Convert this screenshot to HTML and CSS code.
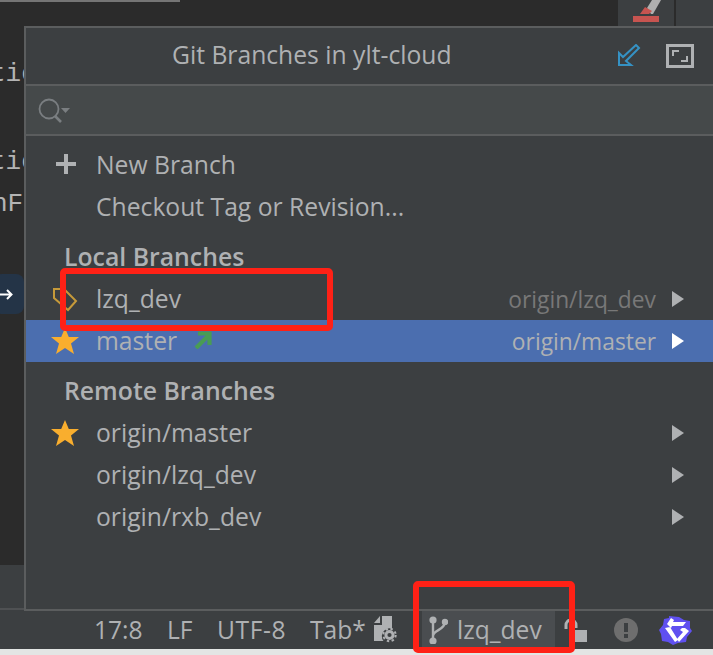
FILE: index.html
```html
<!DOCTYPE html>
<html lang="en">
<head>
<meta charset="utf-8">
<title>Git Branches</title>
<link rel="stylesheet" href="styles.css">
</head>
<body>
<div class="screen">
  <div class="main">
    <div class="editor">
      <div class="tab-line"></div>
      <div class="code code-a">tic</div>
      <div class="code code-b">tic</div>
      <div class="code code-c">nFa</div>
      <div class="gutter-tag">
        <svg width="13" height="13" viewBox="0 0 13 13"><path d="M0 6.500h11M7 2l4.500 4.500L7 11" fill="none" stroke="#fff" stroke-width="2"/></svg>
      </div>
      <div class="toolbar">
        <svg class="eraser" width="28" height="22" viewBox="0 0 28 22"><path d="M14 8 19 0h9l-8 14h-2z" fill="#afafaf"/><path d="M7 14l5-7 7 4-3 3z" fill="#c75450"/><rect x="0" y="16" width="26" height="6" fill="#c75450"/></svg>
      </div>
      <div class="toolbar-end"></div>
    </div>
    <div class="tool-strip"></div>
  </div>

  <div class="statusbar">
    <span class="st st-pos">17:8</span>
    <span class="st st-lf">LF</span>
    <span class="st st-enc">UTF-8</span>
    <span class="st st-tab">Tab*</span>
    <svg class="st-doc" width="24" height="27" viewBox="0 0 24 27"><path d="M8 0h10v12.500a8 8 0 0 0-8.500 12.500H0V9h8z" fill="#afb1b3"/><path d="M0 7 6 0v7z" fill="#afb1b3"/><circle cx="15.500" cy="19" r="3.600" fill="none" stroke="#afb1b3" stroke-width="3"/><circle cx="15.500" cy="19" r="6.200" fill="none" stroke="#afb1b3" stroke-width="2" stroke-dasharray="2.400 2.500"/></svg>
    <div class="st-branch">
      <svg width="20" height="28" viewBox="0 0 20 28"><circle cx="5" cy="4" r="3.600" fill="#afb1b3"/><circle cx="5" cy="25" r="3.600" fill="#afb1b3"/><circle cx="17" cy="6" r="3.200" fill="#afb1b3"/><path d="M5 4v21M17 6c0 8-12 8-12 14" fill="none" stroke="#afb1b3" stroke-width="2.400"/></svg>
      <span>lzq_dev</span>
    </div>
    <svg class="st-lock" width="24" height="24" viewBox="0 0 24 24"><path d="M2 10V6a5 5 0 0 1 10 0v3" fill="none" stroke="#afb1b3" stroke-width="3"/><rect x="11" y="11" width="12" height="12" fill="#afb1b3"/></svg>
    <svg class="st-warn" width="24" height="24" viewBox="0 0 24 24"><circle cx="12" cy="12" r="12" fill="#6e6e6e"/><rect x="10" y="5" width="4" height="9" fill="#3c3f41"/><rect x="10" y="16" width="4" height="4" fill="#3c3f41"/></svg>
    <svg class="st-logo" width="33" height="30" viewBox="0 0 33 30"><path d="M10 1l10 1 5 3 6 1 0 7 2 3-5 6-1 5-8 1-5 2-5-3-6-1-1-7-2-4 4-5 1-6 5-1z" fill="#5f50f0"/><path d="M8 9l4-6 3 2-1 2h13l-3 4H13l-1 2zM6 13l5-1 8 13-3 2zM23 13l3 0 4 3-10 11-2-3 6-7-3-2z" fill="#fff"/></svg>
  </div>
  <div class="desk-strip"></div>

  <section class="popup">
    <header class="popup-head">
      <h1 class="popup-title">Git Branches in ylt-cloud</h1>
      <svg class="ic-pin" width="24" height="24" viewBox="0 0 24 24"><path d="M19 1l3 3L9 17l5 4H2V9l4 4z" fill="none" stroke="#3592c4" stroke-width="2"/></svg>
      <div class="ic-expand"><i class="tl"></i><i class="br"></i></div>
    </header>
    <div class="search">
      <svg width="34" height="26" viewBox="0 0 34 26"><circle cx="11" cy="11" r="9.500" fill="none" stroke="#7a7e81" stroke-width="1.800"/><path d="M17 18l6 6" stroke="#7a7e81" stroke-width="2.600"/><path d="M23 10h9l-4.500 5z" fill="#7a7e81"/></svg>
    </div>
    <div class="list">
      <div class="row">
        <span class="lead"><svg class="plus" width="20" height="20" viewBox="0 0 20 20"><path d="M0 10h20M10 0v20" stroke="#afb1b3" stroke-width="4"/></svg></span>
        <span class="name">New Branch</span>
      </div>
      <div class="row"><span class="lead"></span><span class="name">Checkout Tag or Revision...</span></div>
      <div class="group">Local Branches</div>
      <div class="row">
        <span class="lead"><svg class="tag" width="26" height="26" viewBox="0 0 26 26"><path d="M2 3h10l12 12-8 9L2 12z" fill="none" stroke="#c69a3a" stroke-width="2"/></svg></span>
        <span class="name">lzq_dev</span>
        <span class="track">origin/lzq_dev</span>
        <span class="arrow"></span>
      </div>
      <div class="row row-selected">
        <span class="lead"><svg width="28" height="26" viewBox="0 0 28 26"><path class="star" d="M14 0l3.800 9H28l-8 6.500 3 10.500-9-6-9 6 3-10.500L0 9h10.200z"/></svg></span>
        <span class="name">master</span>
        <svg class="up" width="18" height="18" viewBox="0 0 18 18"><path d="M2 17 14 5M4 2.500h11.500V14" fill="none" stroke="#499c54" stroke-width="4.200"/></svg>
        <span class="track">origin/master</span>
        <span class="arrow"></span>
      </div>
      <div class="group">Remote Branches</div>
      <div class="row">
        <span class="lead"><svg width="28" height="26" viewBox="0 0 28 26"><path class="star" d="M14 0l3.800 9H28l-8 6.500 3 10.500-9-6-9 6 3-10.500L0 9h10.200z"/></svg></span>
        <span class="name">origin/master</span>
        <span class="track"></span>
        <span class="arrow"></span>
      </div>
      <div class="row"><span class="lead"></span><span class="name">origin/lzq_dev</span><span class="track"></span><span class="arrow"></span></div>
      <div class="row"><span class="lead"></span><span class="name">origin/rxb_dev</span><span class="track"></span><span class="arrow"></span></div>
    </div>
  </section>

  <div class="mark mark-row"></div>
  <div class="mark mark-status"></div>
</div>
</body>
</html>
```

FILE: styles.css
```css
* { box-sizing: border-box; }
html, body { margin: 0; padding: 0; }
body { width: 713px; height: 655px; overflow: hidden; background: #3c3f41; }

.screen {
  position: relative;
  width: 713px;
  height: 655px;
  overflow: hidden;
  display: flex;
  flex-direction: column;
  font-family: "Open Sans", "Noto Sans", sans-serif;
  color: #afb1b3;
}

.main { height: 610px; display: flex; flex-direction: column; flex: none; }
.editor { position: relative; height: 565px; background: #2b2b2b; flex: none; }
.tool-strip { flex: 1; background: #3c3f41; border-bottom: 2px solid #4f5153; }

.tab-line { width: 180px; height: 2px; background: #757575; }
.code {
  position: absolute;
  left: -10px;
  font-family: "Liberation Mono", monospace;
  font-size: 26px;
  line-height: 30px;
  color: #b4b4b4;
}
.code-a { top: 59px; }
.code-b { top: 147px; }
.code-c { top: 189px; left: -8px; }

.gutter-tag {
  position: absolute;
  left: -6px;
  top: 274px;
  width: 30px;
  height: 40px;
  border-radius: 8px;
  background: #243447;
  display: flex;
  align-items: center;
  padding-left: 6px;
}

.toolbar {
  position: absolute;
  left: 618px;
  top: 0;
  width: 56px;
  height: 26px;
  background: #3c3f41;
}
.eraser { position: absolute; left: 15px; top: 0; }
.toolbar-end {
  position: absolute;
  left: 676px;
  top: 0;
  width: 37px;
  height: 26px;
  background: #3c3f41;
}

.statusbar {
  position: relative;
  flex: 1;
  display: flex;
  align-items: center;
  background: #3c3f41;
  font-size: 24.6px;
  color: #afb1b3;
  padding-left: 94px;
}
.st { white-space: nowrap; line-height: 38px; }
.st-pos { width: 73px; }
.st-lf { width: 50px; }
.st-enc { width: 93px; letter-spacing: .6px; }
.st-tab { width: 64px; }
.st-doc { margin-right: 24px; flex: none; }
.st-branch {
  flex: none;
  width: 133px;
  height: 39px;
  background: #4a4d50;
  display: flex;
  align-items: center;
  gap: 9px;
  padding-left: 6px;
}
.st-lock { margin: 2px 0 0 9px; flex: none; }
.st-warn { margin-left: 26px; flex: none; }
.st-logo { margin-left: 21px; flex: none; }

.desk-strip { height: 7px; background: #e3e5e4; flex: none; }

.popup {
  position: absolute;
  left: 24px;
  top: 26px;
  width: 700px;
  height: 585px;
  background: #3c3f41;
  border: 2px solid #5b5d5e;
  display: flex;
  flex-direction: column;
}
.popup-head {
  position: relative;
  height: 56px;
  flex: none;
  display: flex;
  align-items: center;
}
.popup-title {
  margin: -2px 0 0 146px;
  font-size: 24.7px;
  font-weight: 400;
  line-height: 56px;
  color: #afb1b3;
}
.ic-pin { position: absolute; left: 591px; top: 16px; }
.ic-expand {
  position: absolute;
  left: 640px;
  top: 16px;
  width: 28px;
  height: 24px;
  border: 3px solid #afb1b3;
}
.ic-expand i { position: absolute; width: 7px; height: 6px; }
.ic-expand .tl { left: 3px; top: 3px; border-left: 2px solid #afb1b3; border-top: 2px solid #afb1b3; }
.ic-expand .br { right: 3px; bottom: 3px; border-right: 2px solid #afb1b3; border-bottom: 2px solid #afb1b3; }

.search {
  height: 52px;
  flex: none;
  background: #45494a;
  border-top: 2px solid #5b5d5e;
  border-bottom: 2px solid #5b5d5e;
  display: flex;
  align-items: center;
  padding: 0 0 0 12px;
}
.search svg { margin-top: 2px; }

.list { padding-top: 8px; flex: 1; }
.row {
  height: 42px;
  display: flex;
  align-items: center;
  font-size: 24.7px;
  white-space: nowrap;
  padding-right: 38px;
}
.lead {
  width: 70px;
  flex: none;
  display: flex;
  align-items: center;
  padding-left: 25px;
}
.plus { margin-left: 5px; margin-bottom: 2px; }
.name { color: #afb1b3; margin-bottom: 2px; }
.track { margin-left: auto; font-size: 22.8px; color: #787878; }
.arrow {
  flex: none;
  width: 0;
  height: 0;
  margin-left: 16px;
  border-left: 12px solid #afb1b3;
  border-top: 8px solid transparent;
  border-bottom: 8px solid transparent;
}
.group {
  height: 50px;
  padding: 6px 0 0 38px;
  font-size: 24.8px;
  font-weight: 600;
  line-height: 50px;
  color: #afb1b3;
  white-space: nowrap;
  display: flex;
  align-items: center;
}
.tag { margin-left: 1px; }
.star { fill: #f9ae2e; }
.row-selected { background: #4b6eaf; }
.row-selected .track { color: #afb1b3; }
.row-selected .arrow { border-left-color: #fff; }
.up { margin-left: 17px; margin-bottom: 3px; }

.mark {
  position: absolute;
  border: 6px solid #ff2116;
  border-radius: 5px;
}
.mark-row { left: 60px; top: 268px; width: 273px; height: 63px; }
.mark-status { left: 413px; top: 581px; width: 162px; height: 72px; }
```
